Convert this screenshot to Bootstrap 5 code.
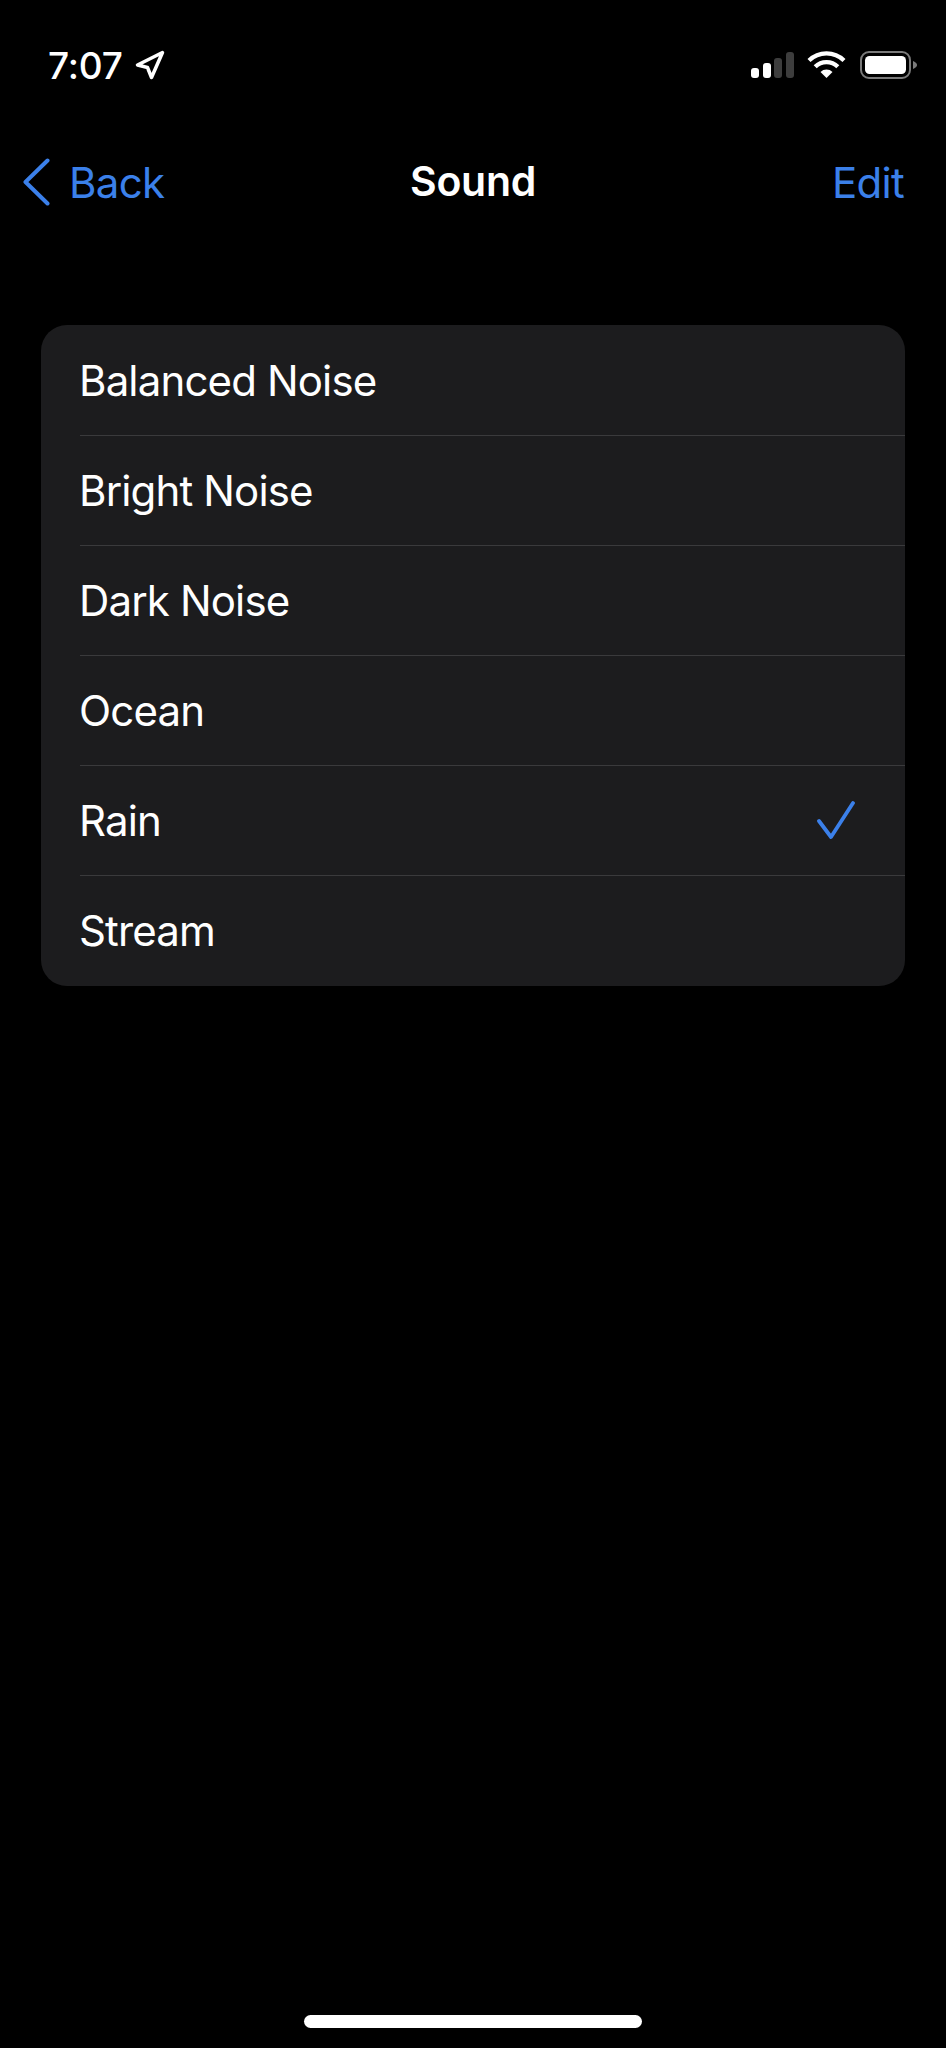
<!doctype html>
<html lang="en">
<head>
<meta charset="utf-8">
<title>Sound</title>
<link href="https://cdn.jsdelivr.net/npm/bootstrap@5.3.0/dist/css/bootstrap.min.css" rel="stylesheet">
<style>
html,body{background:#000;}
body{font-family:Inter,"Liberation Sans",sans-serif;color:#fff;height:2048px;overflow:hidden;}
.phone-page{height:2048px;}
.status-row{height:78px;margin-top:49px;padding-left:48px;padding-right:29px;}
.clock{font-size:37px;font-weight:550;line-height:1;letter-spacing:-.2px;}
.status-left{height:32px;gap:12px;}
.status-right{height:32px;}
.signal-icon{margin-right:13px;}
.wifi-icon{margin-right:14px;}
.nav-row{height:110px;padding:0 42px 0 23px;font-size:42px;font-weight:380;letter-spacing:-.7px;}
.nav-side{flex:1 1 0;}
.ios-blue{color:#3b80ea;}
.back-label{margin-left:19px;}
.nav-title{margin-left:19px;font-weight:600;font-size:41px;letter-spacing:-.3px;}
.sound-card{margin:88px 41px 0;padding-bottom:1px;border-radius:26px;background:#1c1c1e;overflow:hidden;}
.sound-row{background:transparent;border:0;padding:0 0 0 39px;color:#fff;font-size:42px;font-weight:380;letter-spacing:-.85px;text-indent:-1px;}
.sound-inner{height:110px;}
.sound-row + .sound-row .sound-inner{border-top:1.5px solid #3a3a3c;}
.check-wrap{margin-right:50px;}
.home-bar{width:338px;height:13px;border-radius:7px;background:#fff;margin:0 auto 20px;}
</style>
</head>
<body>
<div class="phone-page d-flex flex-column">
  <div class="status-row d-flex align-items-start justify-content-between">
    <div class="status-left d-flex align-items-center">
      <span class="clock">7:07</span>
      <svg width="30" height="30" viewBox="0 0 30 30" fill="none" stroke="#fff" stroke-width="3.500" stroke-linejoin="round"><path d="M27.500 2.500 L2.500 15 L12.500 17.500 L16.500 27.500 Z"/></svg>
    </div>
    <div class="status-right d-flex align-items-center">
      <svg class="signal-icon" width="43" height="28" viewBox="0 0 43 28">
        <rect x="0" y="17" width="8" height="10" rx="3" fill="#fff"/>
        <rect x="12" y="12" width="8" height="15" rx="3" fill="#fff"/>
        <rect x="23" y="7" width="8" height="20" rx="3" fill="#3d3d3d"/>
        <rect x="35" y="1" width="8" height="26" rx="3" fill="#3d3d3d"/>
      </svg>
      <svg class="wifi-icon" width="39" height="28" viewBox="0 0 39 28" fill="none" stroke="#fff" stroke-width="4.300">
        <path d="M2 9.500 A25 25 0 0 1 37 9.500"/>
        <path d="M8.200 15.700 A16 16 0 0 1 30.800 15.700"/>
        <path d="M19.500 27 L13.500 21 A8.500 8.500 0 0 1 25.500 21 Z" fill="#fff" stroke="none"/>
      </svg>
      <svg width="57" height="28" viewBox="0 0 57 28" fill="none">
        <rect x="1" y="1" width="49" height="26" rx="8" stroke="#7a7a7a" stroke-width="2"/>
        <rect x="5" y="5" width="41" height="18" rx="4.500" fill="#fff"/>
        <path d="M53 10 C56 11 57 13 57 14 C57 15 56 17 53 18 Z" fill="#7a7a7a"/>
      </svg>
    </div>
  </div>
  <div class="nav-row d-flex align-items-center">
    <div class="nav-side d-flex align-items-center ios-blue">
      <svg width="27" height="48" viewBox="0 0 27 48" fill="none" stroke="#3b80ea" stroke-width="4" stroke-linecap="round" stroke-linejoin="round"><path d="M24.500 2.500 L2.500 24 L24.500 45.500"/></svg>
      <span class="back-label">Back</span>
    </div>
    <div class="nav-title">Sound</div>
    <div class="nav-side text-end ios-blue">Edit</div>
  </div>
  <div class="list-group sound-card">
    <div class="list-group-item sound-row"><div class="sound-inner d-flex align-items-center">Balanced Noise</div></div>
    <div class="list-group-item sound-row"><div class="sound-inner d-flex align-items-center">Bright Noise</div></div>
    <div class="list-group-item sound-row"><div class="sound-inner d-flex align-items-center">Dark Noise</div></div>
    <div class="list-group-item sound-row"><div class="sound-inner d-flex align-items-center">Ocean</div></div>
    <div class="list-group-item sound-row"><div class="sound-inner d-flex align-items-center justify-content-between">Rain
      <svg class="check-wrap" width="38" height="40" viewBox="0 0 38 40" fill="none" stroke="#3b80ea" stroke-width="3.800" stroke-linecap="round" stroke-linejoin="round"><path d="M2 20 L14 36 L36 2"/></svg></div></div>
    <div class="list-group-item sound-row"><div class="sound-inner d-flex align-items-center">Stream</div></div>
  </div>
  <div class="home-bar mt-auto"></div>
</div>
<script src="https://cdn.jsdelivr.net/npm/bootstrap@5.3.0/dist/js/bootstrap.bundle.min.js"></script>
</body>
</html>
